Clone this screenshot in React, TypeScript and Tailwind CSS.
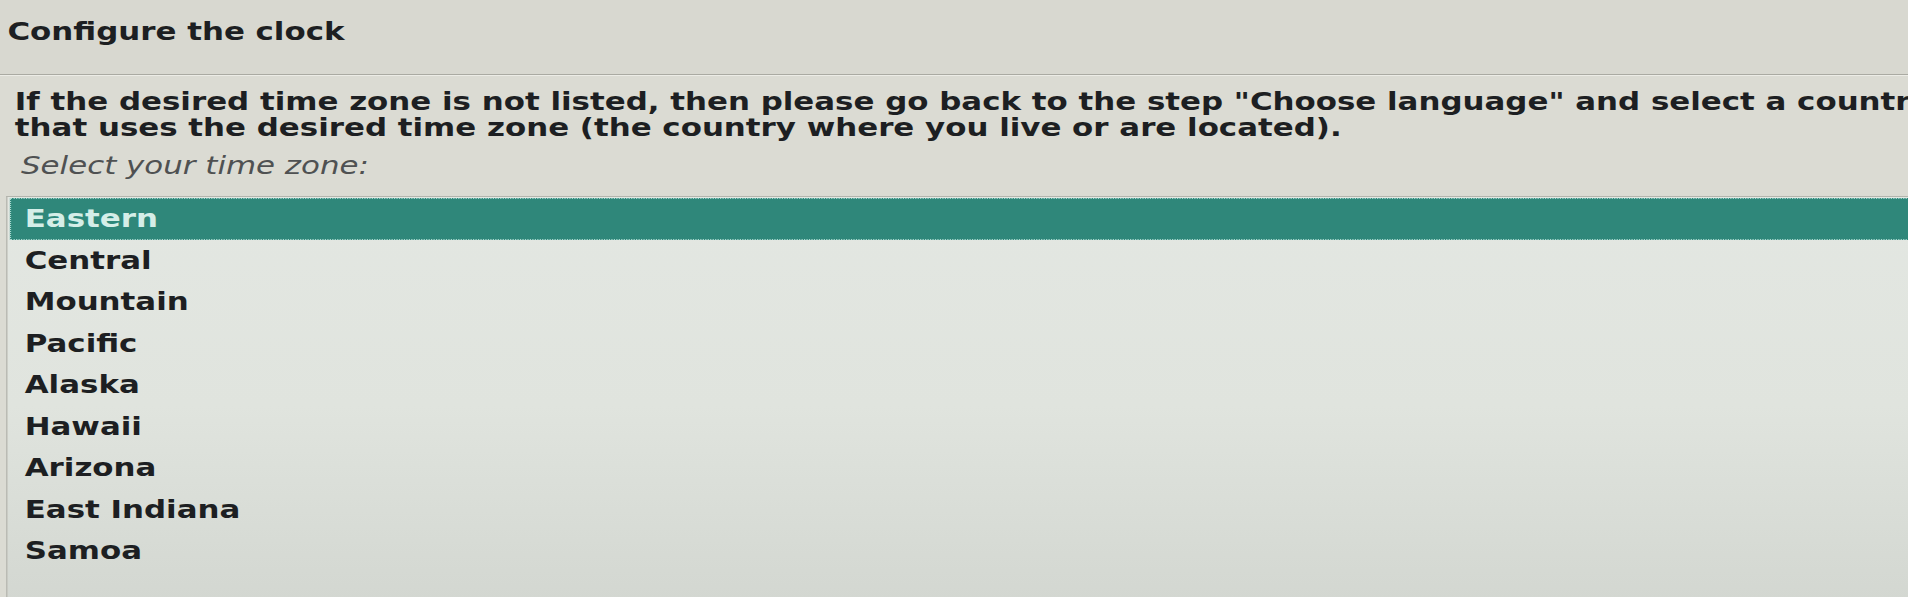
import React from "react";

const zones = [
  "Eastern",
  "Central",
  "Mountain",
  "Pacific",
  "Alaska",
  "Hawaii",
  "Arizona",
  "East Indiana",
  "Samoa",
];

export default function App() {
  const selected = "Eastern";

  return (
    <div className="w-[1908px] h-[597px] overflow-hidden bg-[#dbdbd3] font-['DejaVu_Sans',sans-serif] text-[25px] text-[#1d1f22] antialiased">
      {/* the installer frame is stretched horizontally in the capture */}
      <div className="w-[1560px] origin-top-left scale-x-[1.235]">
        {/* Title bar */}
        <div className="h-[75px] bg-[#d8d8d0] border-b border-[#aaaaa2] pl-[6px] pt-[17px]">
          <h1 className="font-bold leading-[30px]">Configure the clock</h1>
        </div>
        <div className="h-px bg-[#ecece6]" />

        {/* Body */}
        <div className="pt-[13px]">
          <p className="pl-[12px] font-bold leading-[26px] whitespace-nowrap">
            If the desired time zone is not listed, then please go back to the
            step "Choose language" and select a country
            <br />
            that uses the desired time zone (the country where you live or are
            located).
          </p>
          <p className="mt-[12px] pl-[17px] italic leading-[26px] text-[#4f5152]">
            Select your time zone:
          </p>

          {/* Time zone list */}
          <div className="mt-[17px] ml-[5px] h-[420px] border-t border-l border-[#b3b5ad] bg-gradient-to-b from-[#e3e7e2] via-[#e0e4de] to-[#d2d6d0] pt-[1px]">
            {zones.map((zone) => (
              <div
                key={zone}
                className={`h-[41.5px] flex items-center font-bold ${
                  zone === selected
                    ? "bg-[#2f877a] text-[#d5eee8] border border-dotted border-[#a9d8cf] ml-[2px] pl-[11px]"
                    : "pl-[14px]"
                }`}
              >
                {zone}
              </div>
            ))}
          </div>
        </div>
      </div>
    </div>
  );
}
